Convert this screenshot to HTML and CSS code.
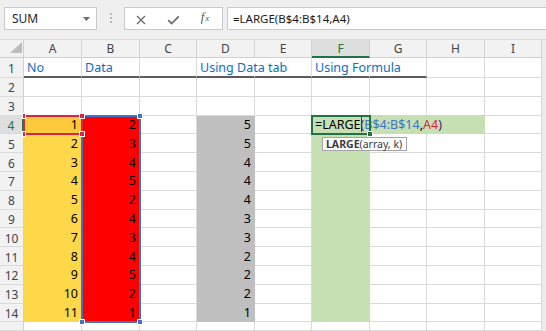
FILE: index.html
```html
<!DOCTYPE html>
<html>
<head>
<meta charset="utf-8">
<link rel="stylesheet" href="styles.css">
</head>
<body>
<div class="topbar">
  <div class="namebox"><span>SUM</span><svg width="7" height="4" viewBox="0 0 7 4"><path d="M0 0H7L3.5 4Z" fill="#6b6b6b"/></svg></div>
  <div class="grip"><i></i><i></i><i></i></div>
  <div class="fbtns">
    <span class="btn"><svg width="10" height="10" viewBox="0 0 10 10"><path d="M1 1L9 9M9 1L1 9" stroke="#6a6a6a" stroke-width="1.3" fill="none"/></svg></span>
    <span class="btn"><svg width="13" height="10" viewBox="0 0 13 10"><path d="M1.2 5.2L4.6 8.6L11.8 1.4" stroke="#6a6a6a" stroke-width="1.7" fill="none"/></svg></span>
    <span class="btn fx"><i>f</i><i class="fxx">x</i></span>
  </div>
  <div class="fbox">=LARGE(B$4:B$14,A4)</div>
</div>
<div class="sheet">
  <div class="cells">
    <div class="c corner"><svg width="12" height="11" viewBox="0 0 12 11"><path d="M12 0V11H0Z" fill="#bcbcbc"/></svg></div>
    <div class="c ch">A</div><div class="c ch">B</div><div class="c ch">C</div><div class="c ch">D</div><div class="c ch">E</div><div class="c ch ch-on">F</div><div class="c ch">G</div><div class="c ch">H</div><div class="c ch">I</div>

    <div class="c rh">1</div>
    <div class="c u t">No</div><div class="c u t">Data</div><div class="c u"></div><div class="c u t spill">Using Data tab</div><div class="c u"></div><div class="c u t spill">Using Formula</div><div class="c u"></div><div class="c"></div><div class="c"></div>

    <div class="c rh">2</div>
    <div class="c"></div><div class="c"></div><div class="c"></div><div class="c"></div><div class="c"></div><div class="c"></div><div class="c"></div><div class="c"></div><div class="c"></div>

    <div class="c rh">3</div>
    <div class="c"></div><div class="c"></div><div class="c"></div><div class="c"></div><div class="c"></div><div class="c"></div><div class="c"></div><div class="c"></div><div class="c"></div>

    <div class="c rh rh-on">4</div>
    <div class="c n fy a4">1</div><div class="c n fr">2</div><div class="c"></div><div class="c n fg">5</div><div class="c"></div><div class="c fgr"></div><div class="c"></div><div class="c"></div><div class="c"></div>

    <div class="c rh">5</div>
    <div class="c n fy">2</div><div class="c n fr">3</div><div class="c"></div><div class="c n fg">5</div><div class="c"></div><div class="c fgr"></div><div class="c"></div><div class="c"></div><div class="c"></div>

    <div class="c rh">6</div>
    <div class="c n fy">3</div><div class="c n fr">4</div><div class="c"></div><div class="c n fg">4</div><div class="c"></div><div class="c fgr"></div><div class="c"></div><div class="c"></div><div class="c"></div>

    <div class="c rh">7</div>
    <div class="c n fy">4</div><div class="c n fr">5</div><div class="c"></div><div class="c n fg">4</div><div class="c"></div><div class="c fgr"></div><div class="c"></div><div class="c"></div><div class="c"></div>

    <div class="c rh">8</div>
    <div class="c n fy">5</div><div class="c n fr">2</div><div class="c"></div><div class="c n fg">4</div><div class="c"></div><div class="c fgr"></div><div class="c"></div><div class="c"></div><div class="c"></div>

    <div class="c rh">9</div>
    <div class="c n fy">6</div><div class="c n fr">4</div><div class="c"></div><div class="c n fg">3</div><div class="c"></div><div class="c fgr"></div><div class="c"></div><div class="c"></div><div class="c"></div>

    <div class="c rh">10</div>
    <div class="c n fy">7</div><div class="c n fr">3</div><div class="c"></div><div class="c n fg">3</div><div class="c"></div><div class="c fgr"></div><div class="c"></div><div class="c"></div><div class="c"></div>

    <div class="c rh">11</div>
    <div class="c n fy">8</div><div class="c n fr">4</div><div class="c"></div><div class="c n fg">2</div><div class="c"></div><div class="c fgr"></div><div class="c"></div><div class="c"></div><div class="c"></div>

    <div class="c rh">12</div>
    <div class="c n fy">9</div><div class="c n fr">5</div><div class="c"></div><div class="c n fg">2</div><div class="c"></div><div class="c fgr"></div><div class="c"></div><div class="c"></div><div class="c"></div>

    <div class="c rh">13</div>
    <div class="c n fy">10</div><div class="c n fr">2</div><div class="c"></div><div class="c n fg">2</div><div class="c"></div><div class="c fgr"></div><div class="c"></div><div class="c"></div><div class="c"></div>

    <div class="c rh">14</div>
    <div class="c n fy">11</div><div class="c n fr">1</div><div class="c"></div><div class="c n fg">1</div><div class="c"></div><div class="c fgr"></div><div class="c"></div><div class="c"></div><div class="c"></div>

    <div class="c rh"></div>
    <div class="c"></div><div class="c"></div><div class="c"></div><div class="c"></div><div class="c"></div><div class="c"></div><div class="c"></div><div class="c"></div><div class="c"></div>
  </div>

  <div class="overlay">
    <div class="ref ref-blue"><i class="h tr"></i><i class="h bl"></i><i class="h br"></i></div>
    <div class="ref ref-red"><i class="h tl"></i><i class="h tr"></i><i class="h bl"></i><i class="h br"></i></div>
    <div class="editor">=LARGE<span class="caret"></span><span class="par">(</span><span class="rb">B$4:B$14</span>,<span class="rr">A4</span><span class="par">)</span></div>
    <div class="active"><i class="fillh"></i></div>
    <div class="tip"><b>LARGE</b>(array, k)</div>
  </div>
</div>
</body>
</html>
```
FILE: styles.css
```css
html, body {
  margin: 0;
  padding: 0;
  width: 546px;
  height: 331px;
  overflow: hidden;
  background: #ffffff;
  font-family: "Noto Sans", "Open Sans", sans-serif;
}

/* ---------- formula bar ---------- */
.topbar {
  height: 40px;
  box-sizing: border-box;
  background: #efefef;
  border-bottom: 1px solid #d9d9d9;
  display: flex;
  align-items: flex-start;
  padding-top: 7px;
}
.namebox {
  margin-left: 4px;
  width: 93px;
  height: 23px;
  box-sizing: border-box;
  background: #ffffff;
  border: 1px solid #c9c9c9;
  display: flex;
  align-items: center;
  justify-content: space-between;
  padding: 0 6px 0 7px;
  font-size: 12px;
  color: #262626;
}
.grip {
  margin-left: 13px;
  margin-top: 6px;
  display: flex;
  flex-direction: column;
  gap: 2px;
}
.grip i {
  display: block;
  width: 2px;
  height: 2px;
  background: #b9b9b9;
}
.fbtns {
  margin-left: 12px;
  width: 99px;
  height: 23px;
  box-sizing: border-box;
  background: #ffffff;
  border: 1px solid #c9c9c9;
  display: grid;
  grid-template-columns: 32px 32px 32px;
  align-items: center;
  justify-items: center;
}
.btn {
  display: flex;
  align-items: center;
  justify-content: center;
  height: 21px;
}
.fx {
  font-family: "Liberation Serif", "DejaVu Serif", serif;
  color: #5a5a5a;
  font-size: 13px;
  line-height: 1;
  align-items: baseline;
  padding-top: 2px;
}
.fx .fxx {
  font-size: 9px;
  margin-left: 1px;
}
.fbox {
  margin-left: 4px;
  flex: 1;
  height: 23px;
  box-sizing: border-box;
  background: #ffffff;
  border: 1px solid #c9c9c9;
  border-right: none;
  padding-left: 5px;
  font-size: 11.5px;
  line-height: 21px;
  color: #1a1a1a;
  white-space: nowrap;
}

/* ---------- sheet ---------- */
.sheet {
  display: grid;
  height: 291px;
  background: #ececec;
}
.cells, .overlay {
  grid-area: 1 / 1;
  display: grid;
  grid-template-columns: 24px 58px 58px 57px 58px 57px 58px 57px 58px 57px;
  grid-template-rows: 18px 20px repeat(13, 18.8px) 1fr;
  width: 542px;
}
.cells {
  background: #ffffff;
}
.overlay {
  pointer-events: none;
}

.c {
  box-sizing: border-box;
  border-right: 1px solid #dadada;
  border-bottom: 1px solid #dadada;
  display: flex;
  align-items: center;
  padding: 0 3px;
  font-size: 12.5px;
  color: #000000;
  white-space: nowrap;
  min-width: 0;
}
.n {
  justify-content: flex-end;
}
.t {
  color: #0a6fc2;
}
.spill {
  border-right-color: transparent;
  position: relative;
  z-index: 1;
}
.u {
  border-bottom: 2px solid #5c5c5c;
}

/* headers */
.corner {
  background: #f2f2f2;
  border-right: 1px solid #cfcfcf;
  border-bottom: 1px solid #cfcfcf;
  align-items: flex-end;
  justify-content: flex-end;
  padding: 0 1px 4px 0;
}
.ch {
  background: #f2f2f2;
  border-right: 1px solid #d4d4d4;
  border-bottom: 1px solid #cfcfcf;
  justify-content: center;
  font-size: 12px;
  color: #444444;
}
.ch-on {
  background: #dedede;
  color: #217346;
  border-bottom: 2px solid #217346;
}
.rh {
  background: #f2f2f2;
  border-right: 1px solid #cfcfcf;
  border-bottom: 1px solid #dadada;
  justify-content: center;
  padding: 2px 0 0 0;
  font-size: 12px;
  color: #444444;
}
.rh-on {
  background: #dedede;
  color: #217346;
  border-right: 2px solid #217346;
}

/* fills */
.fy { background: #ffd84a; border-color: #ffd84a; }
.a4 { background: #ffc93c; border-color: #ffc93c; }
.fr { background: #ff0000; border-color: #ff0000; }
.fg { background: #bfbfbf; border-color: #bfbfbf; }
.fgr { background: #c6e0b4; border-color: #c6e0b4; }

/* ---------- overlays ---------- */
.ref {
  box-sizing: border-box;
  margin: -1px -1px -1px -1px;
  position: relative;
}
.ref-red {
  grid-column: 2;
  grid-row: 5;
  border: 2px solid #d9233f;
}
.ref-blue {
  grid-column: 3;
  grid-row: 5 / 16;
  border: 2px solid #3f72c8;
}
.h {
  position: absolute;
  width: 4px;
  height: 4px;
  border: 1px solid #ffffff;
}
.ref-red .h { background: #d9233f; }
.ref-blue .h { background: #3f72c8; }
.h.tl { left: -3px; top: -4px; width: 2px; }
.h.tr { right: -4px; top: -4px; }
.h.bl { left: -4px; bottom: -4px; }
.ref-red .h.bl { left: -3px; width: 2px; }
.h.br { right: -4px; bottom: -4px; }

.editor {
  grid-column: 7 / 10;
  grid-row: 5;
  margin-top: -1px;
  background: #c6e0b4;
  padding-left: 3px;
  display: flex;
  align-items: center;
  font-size: 12.5px;
  color: #000000;
  white-space: nowrap;
}
.caret {
  display: inline-block;
  width: 0;
  height: 15px;
  border-left: 1px solid #4f2a80;
  margin-right: -1px;
}
.par { color: #3b2b6b; }
.rb { color: #3f72c8; }
.rr { color: #d9233f; }

.active {
  grid-column: 7;
  grid-row: 5;
  box-sizing: border-box;
  margin: -1px -1px -1px -1px;
  border: 2px solid #217346;
  position: relative;
}
.fillh {
  position: absolute;
  right: -4px;
  bottom: -4px;
  width: 4px;
  height: 4px;
  background: #217346;
  border: 1px solid #ffffff;
}

.tip {
  grid-column: 7 / 10;
  grid-row: 6;
  justify-self: start;
  align-self: start;
  margin: 3px 0 0 10px;
  background: #ffffff;
  border: 1px solid #a6a6a6;
  padding: 0 4px 0 3px;
  font-size: 10.5px;
  line-height: 12px;
  color: #3a3a3a;
  white-space: nowrap;
}
.tip b {
  font-weight: 700;
}
```
